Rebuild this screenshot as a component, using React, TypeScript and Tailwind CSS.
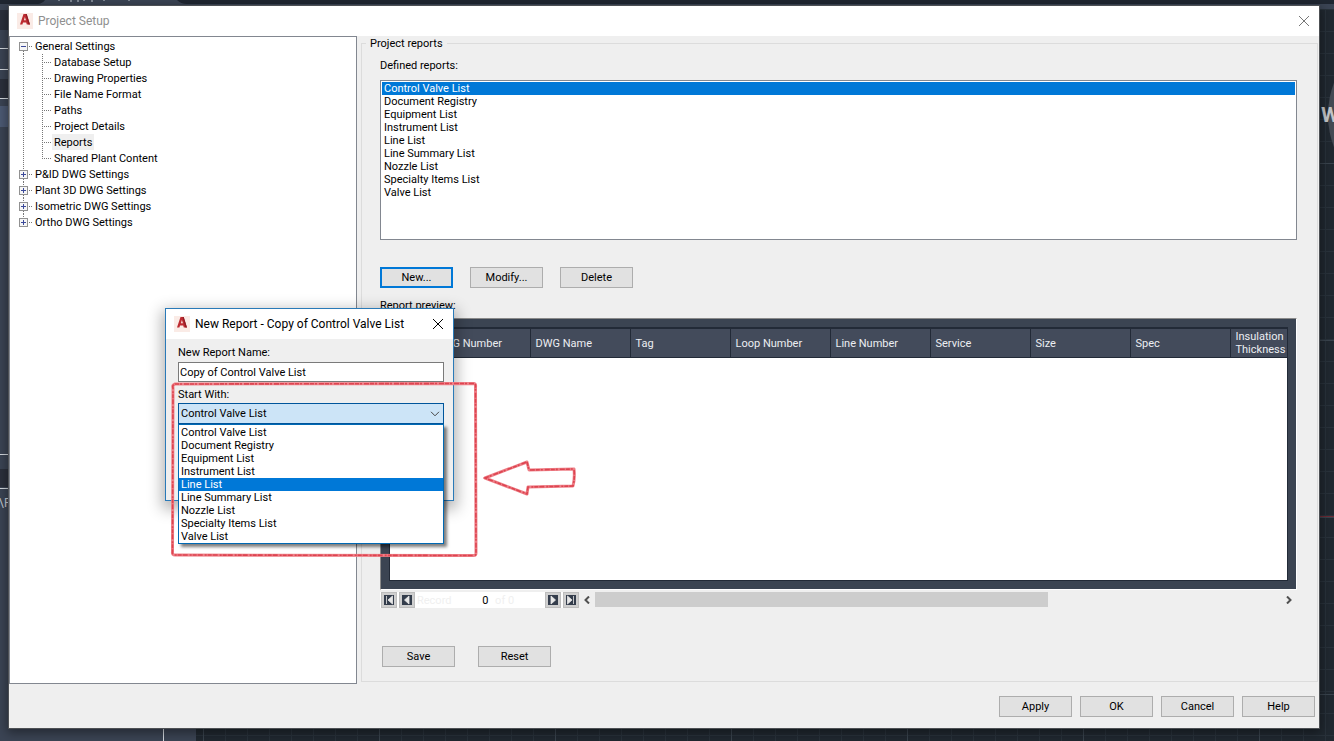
import * as React from "react";

const REPORTS = [
  "Control Valve List",
  "Document Registry",
  "Equipment List",
  "Instrument List",
  "Line List",
  "Line Summary List",
  "Nozzle List",
  "Specialty Items List",
  "Valve List",
];

const COLUMNS = ["DWG Number", "DWG Name", "Tag", "Loop Number", "Line Number", "Service", "Size", "Spec"];

const TREE: Array<{ label: string; children?: string[] }> = [
  {
    label: "General Settings",
    children: [
      "Database Setup",
      "Drawing Properties",
      "File Name Format",
      "Paths",
      "Project Details",
      "Reports",
      "Shared Plant Content",
    ],
  },
  { label: "P&ID DWG Settings" },
  { label: "Plant 3D DWG Settings" },
  { label: "Isometric DWG Settings" },
  { label: "Ortho DWG Settings" },
];

export default function App() {
  return (
    <div className="relative flex min-h-screen overflow-hidden bg-[#202830] pt-1.5 pr-[15px] pb-[13px] pl-[9px] font-['Roboto','Liberation_Sans',sans-serif] text-[11px] leading-[13px] text-black">
      <Desktop />
      <div className="relative flex min-w-0 flex-1 flex-col bg-[#efefef] shadow-[0_0_0_1px_#4d5054,0_3px_10px_2px_rgba(0,0,0,0.4)]">
        <header className="flex h-[30px] items-center bg-white pr-[9px] pl-2">
          <AppLogo />
          <h1 className="ml-[5px] flex-1 text-[12px] leading-4 text-[#8f8f8f]">Project Setup</h1>
          <CloseButton className="text-[#777]" />
        </header>

        <main className="flex flex-1">
          <SettingsTree />
          <ProjectReports />
        </main>

        <footer className="flex h-11 items-center justify-end gap-2 pr-1">
          <PushButton>Apply</PushButton>
          <PushButton>OK</PushButton>
          <PushButton>Cancel</PushButton>
          <PushButton>Help</PushButton>
        </footer>
      </div>

      <NewReportDialog />
      <Markup />
    </div>
  );
}

function SettingsTree() {
  return (
    <nav aria-label="Settings" className="w-[348px] shrink-0 border border-[#828790] bg-white pt-px">
      <ul>
        {TREE.map((node, i) => (
          <li key={node.label}>
            <div className="flex h-4 items-center">
              <RootGuide open={!!node.children} last={i === TREE.length - 1} />
              <span className="pl-px">{node.label}</span>
            </div>
            {node.children && (
              <ul>
                {node.children.map((c, j) => (
                  <li key={c} className="flex h-4">
                    <ChildGuide last={j === node.children!.length - 1} />
                    <span className={c === "Reports" ? "bg-[#efefef] px-0.5 pt-0.5" : "px-0.5 pt-0.5"}>{c}</span>
                  </li>
                ))}
              </ul>
            )}
          </li>
        ))}
      </ul>
    </nav>
  );
}

function RootGuide({ open, last }: { open: boolean; last: boolean }) {
  return (
    <svg width="24" height="16" shapeRendering="crispEdges" className="shrink-0" aria-hidden="true">
      {!open && <path d="M13.5 0v4" stroke="#777" strokeDasharray="1 1" />}
      {!last && <path d="M13.5 13v3" stroke="#777" strokeDasharray="1 1" />}
      <path d="M19 8.5h4" stroke="#777" strokeDasharray="1 1" />
      <rect x="9.5" y="4.5" width="8" height="8" fill="#f6f6f6" stroke="#919191" />
      <path d={open ? "M11 8.5h5" : "M11 8.5h5M13.5 6v5"} stroke="#3c4a9a" />
    </svg>
  );
}

function ChildGuide({ last }: { last: boolean }) {
  return (
    <svg width="42" height="16" shapeRendering="crispEdges" className="shrink-0" aria-hidden="true">
      <path d="M13.5 0v16M32 8.5h9" stroke="#777" strokeDasharray="1 1" />
      <path d={last ? "M32.5 0v9" : "M32.5 0v16"} stroke="#777" strokeDasharray="1 1" />
    </svg>
  );
}

function ProjectReports() {
  return (
    <fieldset className="mt-px mr-px mb-0.5 ml-1 flex min-w-0 flex-1 flex-col border border-[#dcdcdc] pr-5 pl-[18px]">
      <legend className="-ml-3.5 px-1">Project reports</legend>
      <h2 id="defined-reports" className="mt-[9px]">Defined reports:</h2>
      <ul
        role="listbox"
        aria-labelledby="defined-reports"
        className="mt-2 h-40 border border-[#828790] bg-white p-px"
      >
        {REPORTS.map((r, i) => (
          <li
            key={r}
            role="option"
            aria-selected={i === 0}
            className={i === 0 ? "bg-[#0078d7] px-0.5 text-white" : "px-0.5"}
          >
            {r}
          </li>
        ))}
      </ul>

      <div className="mt-[27px] flex gap-[17px]">
        <PushButton primary>New...</PushButton>
        <PushButton>Modify...</PushButton>
        <PushButton>Delete</PushButton>
      </div>

      <h2 className="mt-[11px]">Report preview:</h2>
      <div className="mt-1.5 h-[272px] border border-t-[#8a8a8a] border-r-white border-b-white border-l-[#8a8a8a] bg-[#3b4452] p-2">
        <div className="h-full border border-[#222a37] bg-white">
          <table className="w-full table-fixed border-collapse bg-[#434b5b] text-left text-[#eceef2]">
            <thead>
              <tr className="h-[29px] border-t border-b border-[#222a37]">
                <th className="w-10" aria-label="Row" />
                {COLUMNS.map(c => (
                  <th key={c} className="w-[100px] border-r border-l border-[#222a37] pl-[5px] font-normal">{c}</th>
                ))}
                <th className="p-0 pl-[5px] font-normal">Insulation Thickness</th>
              </tr>
            </thead>
          </table>
        </div>
      </div>

      <div className="mt-0.5 flex h-4 items-start">
        <div className="flex h-4 w-[199px] shrink-0 items-center gap-0.5 bg-white pl-px">
          <NavButton label="First record" d="M3.5 2v8M9.5 2v8L5 6z" />
          <NavButton label="Previous record" d="M8 2v8L3.500 6z" />
          <span className="flex-1 text-[#f0f0f0]">
            Record <span className="pr-1 pl-7 text-black">0</span> of 0
          </span>
          <NavButton label="Next record" d="M4 2v8L8.500 6z" />
          <NavButton label="Last record" d="M8.500 2v8M2.500 2v8L7 6z" />
        </div>
        <button aria-label="Scroll left" className="flex h-[15px] w-4 items-center justify-center">
          <svg width="8" height="8" fill="none" stroke="#505050" strokeWidth="2"><path d="M6 .5L2.500 4L6 7.500" /></svg>
        </button>
        <div className="h-[15px] flex-1">
          <div className="h-full w-[66%] bg-[#cdcdcd]" />
        </div>
        <button aria-label="Scroll right" className="flex h-[15px] w-4 items-center justify-center">
          <svg width="8" height="8" fill="none" stroke="#505050" strokeWidth="2"><path d="M2 .5L5.500 4L2 7.500" /></svg>
        </button>
      </div>

      <div className="mt-[38px] mb-3.5 ml-0.5 flex gap-[23px]">
        <PushButton>Save</PushButton>
        <PushButton>Reset</PushButton>
      </div>
    </fieldset>
  );
}

function NewReportDialog() {
  return (
    <div
      role="dialog"
      aria-labelledby="new-report-title"
      className="absolute top-[308px] left-[165px] h-[193px] w-[289px] border border-[#2a7ab8] bg-[#efefef] shadow-[0_5px_14px_3px_rgba(0,0,0,0.3)]"
    >
      <header className="flex h-[30px] items-center bg-white pr-[9px] pl-2">
        <AppLogo />
        <h2 id="new-report-title" className="ml-[5px] flex-1 text-[12px] leading-4 whitespace-nowrap">
          New Report - Copy of Control Valve List
        </h2>
        <CloseButton className="text-black" />
      </header>
      <div className="flex flex-col pt-[7px] pr-[9px] pl-3">
        <label htmlFor="report-name">New Report Name:</label>
        <input
          id="report-name"
          defaultValue="Copy of Control Valve List"
          className="mt-[3px] h-5 border border-[#7a7a7a] bg-white px-px outline-none"
        />
        <label htmlFor="start-with" className="mt-1.5">Start With:</label>
        <div className="relative mt-0.5">
          <select
            id="start-with"
            defaultValue="Control Valve List"
            className="block h-[21px] w-full appearance-none border border-[#00559b] bg-[#cce4f7] px-0.5 outline-none"
          >
            {REPORTS.map(r => <option key={r}>{r}</option>)}
          </select>
          <svg className="pointer-events-none absolute top-2 right-1" width="10" height="6" fill="none" stroke="#444" aria-hidden="true">
            <path d="M1 .8L5 4.800L9 .8" />
          </svg>
          <ul
            role="listbox"
            aria-label="Start With"
            className="absolute top-full right-0 left-0 border border-[#0069b4] bg-white pt-px shadow-[3px_3px_3px_rgba(0,0,0,0.5)]"
          >
            {REPORTS.map(r => (
              <li
                key={r}
                role="option"
                aria-selected={r === "Line List"}
                className={r === "Line List" ? "bg-[#0078d7] px-0.5 text-white" : "px-0.5"}
              >
                {r}
              </li>
            ))}
          </ul>
        </div>
      </div>
    </div>
  );
}

function PushButton({ children, primary }: { children: React.ReactNode; primary?: boolean }) {
  const border = primary ? "border-2 border-[#0078d7]" : "border border-[#adadad]";
  return <button className={`flex h-[21px] w-[73px] items-center justify-center bg-[#e1e1e1] ${border}`}>{children}</button>;
}

function NavButton({ label, d }: { label: string; d: string }) {
  return (
    <button aria-label={label} className="flex size-4 shrink-0 items-center justify-center border border-[#bdbdbd] bg-[#cfcfcf]">
      <svg width="12" height="12" aria-hidden="true">
        <rect x="1" y="1" width="10" height="10" fill="#343d4c" />
        <path d={d} fill="#e8e8e8" stroke="#e8e8e8" strokeWidth="0.8" />
      </svg>
    </button>
  );
}

function CloseButton({ className }: { className: string }) {
  return (
    <button aria-label="Close" className={className}>
      <svg width="12" height="12" fill="none" stroke="currentColor" aria-hidden="true">
        <path d="M1 1l10 10M11 1L1 11" />
      </svg>
    </button>
  );
}

// red "A" mark, three facets on a pale tile
function AppLogo() {
  return (
    <svg width="16" height="16" viewBox="0 0 16 16" className="shrink-0" aria-hidden="true">
      <rect width="16" height="16" fill="#faebe6" />
      <path d="M3 11.500L6.500 1h3.200L13 11.500h-3.200l-.6-2H6l-.6 2z" fill="#bd2a30" />
      <path d="M7.900 4L6.900 7.200h2z" fill="#faebe6" />
      <path d="M8.500 1h1.200L13 11.500h-1.600z" fill="#8f1c24" />
    </svg>
  );
}

// the drawing application behind the window
function Desktop() {
  return (
    <svg className="absolute inset-0 h-full w-full" aria-hidden="true">
      <defs>
        <pattern id="minor" x="5" y="9" width="22" height="22" patternUnits="userSpaceOnUse">
          <path d="M.5 0v22M0 .5h22" stroke="#29323b" />
        </pattern>
        <pattern id="major" x="27" y="163" width="176" height="177" patternUnits="userSpaceOnUse">
          <path d="M.5 0v177M0 .5h176" stroke="#39434d" />
        </pattern>
      </defs>
      <rect width="100%" height="100%" fill="#202830" />
      <rect width="100%" height="100%" fill="url(#minor)" />
      <rect width="100%" height="100%" fill="url(#major)" />
      <rect width="100%" height="9" fill="#3b4454" />
      <rect width="100%" height="4" fill="#1f2631" />
      <path d="M45 0h132q4 4 10 4H38q5-1 7-4z" fill="#3b4454" />
      <path d="M59 0v1M71 0v2M78 0v2M84 0v1M92 0v2M104 0v1M129 0v1" stroke="#c5cbd3" />
      <path d="M0 4h9v737H0zM0 728h196v13H0z" fill="#3b4454" />
      <path d="M0 10h9v20H0zM0 79h9v19H0zM0 469h9v18H0z" fill="#2b303c" />
      <path d="M0 106h9v21H0z" fill="#4c5a73" />
      <path d="M0 48.500h9M0 69.500h9M0 98.500h9M0 454.500h9M0 488.500h9M163.500 728v13" stroke="#d4d9df" />
      <text x="-1" y="507" fill="#c5cbd3" fontSize="12">\F</text>
      <path d="M1319 516.500h15" stroke="#6b2a33" />
      <circle cx="1418" cy="115" r="90" fill="#444b54" />
      <text x="1321" y="122" fill="#c3c5c8" fontSize="21" fontWeight="700">W</text>
    </svg>
  );
}

// hand drawn red frame and arrow
function Markup() {
  const arrow = "M485 478L527 462L529 470L574 469Q575 478 573 486L528 487L527 494Z";
  const frame = "M175 384L474 383.500Q476 384 475.500 387L476 553Q476 556 473 555.500L175 555Q172 555 172.500 552L173 388Q172 385 175 384Z";
  return (
    <svg className="pointer-events-none absolute top-0 left-0" width="600" height="570" fill="none" aria-hidden="true">
      <path d={frame} stroke="#ee8088" strokeWidth="3" strokeLinejoin="round" />
      <path d={frame} stroke="#dd4450" strokeWidth="1.600" strokeDasharray="4 1 2 2 5 1" />
      <path d={arrow} stroke="#ee8088" strokeWidth="3" strokeLinejoin="round" />
      <path d={arrow} stroke="#dd4450" strokeWidth="1.600" strokeDasharray="4 1 2 2 5 1" />
    </svg>
  );
}
